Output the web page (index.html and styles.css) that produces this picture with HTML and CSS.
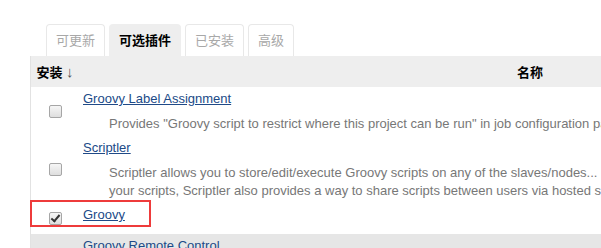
FILE: index.html
```html
<!DOCTYPE html>
<html lang="zh-CN">
<head>
    <meta charset="UTF-8">
    <meta name="viewport" content="width=device-width, initial-scale=1.0">
    <title>插件管理</title>
    <link rel="stylesheet" href="styles.css">
</head>
<body>
    <div class="plugin-manager">
        <div class="tabs">
            <a class="tab">可更新</a>
            <a class="tab active">可选插件</a>
            <a class="tab">已安装</a>
            <a class="tab">高级</a>
        </div>

        <table class="plugins">
            <thead>
                <tr>
                    <th class="col-install">安装&nbsp;<span class="sort-arrow">↓</span></th>
                    <th class="col-name">名称</th>
                    <th class="col-version">版本</th>
                </tr>
            </thead>
            <tbody>
                <tr>
                    <td class="install"><input type="checkbox"></td>
                    <td class="name">
                        <div><a href="#">Groovy Label Assignment</a></div>
                        <div class="excerpt">Provides "Groovy script to restrict where this project can be run" in job configuration pages.</div>
                    </td>
                    <td class="version">1.2.0</td>
                </tr>
                <tr>
                    <td class="install"><input type="checkbox"></td>
                    <td class="name">
                        <div><a href="#">Scriptler</a></div>
                        <div class="excerpt">Scriptler allows you to store/edit/execute Groovy scripts on any of the slaves/nodes... no need to copy paste groovy code anymore. Besides administrating your scripts, Scriptler also provides a way to share scripts between users via hosted script catalogs on the internet.</div>
                    </td>
                    <td class="version">2.9</td>
                </tr>
                <tr>
                    <td class="install marked">
                        <input type="checkbox" checked>
                        <div class="highlight"></div>
                    </td>
                    <td class="name">
                        <div><a href="#">Groovy</a></div>
                        <div class="excerpt"></div>
                    </td>
                    <td class="version">2.0</td>
                </tr>
                <tr class="hover">
                    <td class="install"><input type="checkbox"></td>
                    <td class="name">
                        <div><a href="#">Groovy Remote Control</a></div>
                        <div class="excerpt">Groovy Remote Control Plugin for remote calls.</div>
                    </td>
                    <td class="version">2.0</td>
                </tr>
            </tbody>
        </table>
    </div>
</body>
</html>
```

FILE: styles.css
```css
body {
    margin: 0;
    font-family: "Liberation Sans", Arial, "Noto Sans CJK SC", sans-serif;
    font-size: 13px;
    color: #000;
    background: #fff;
    overflow: hidden;
}

.plugin-manager {
    padding: 24px 0 0 30px;
}

.tabs {
    display: flex;
    gap: 4px;
    margin-left: 16px;
}

.tab {
    box-sizing: border-box;
    height: 32px;
    line-height: 31px;
    padding: 0 9px;
    border: 1px solid #e8e8e8;
    border-bottom: none;
    border-radius: 4px 4px 0 0;
    color: #a8a8a8;
    cursor: pointer;
}

.tab.active {
    background-color: #eee;
    border-color: #eee;
    color: #000;
    font-weight: bold;
}

.plugins {
    width: 1100px;
    table-layout: fixed;
    border-collapse: collapse;
    border-left: 1px solid #e2e2e2;
}

.plugins th {
    height: 31px;
    padding: 0;
    background-color: #eee;
    font-weight: bold;
    text-align: center;
}

.col-install { width: 48px; }
.col-name { width: 902px; }

.sort-arrow {
    font-weight: normal;
    font-size: 15px;
    color: #555;
}

.plugins td {
    padding: 3px 4px;
    vertical-align: top;
}

.plugins td.install {
    padding: 0;
    text-align: center;
    vertical-align: middle;
}

.name div {
    line-height: 18px;
}

.name a {
    color: #204a87;
}

.name .excerpt {
    margin-top: 7px;
    margin-right: -32px;
    padding-left: 26px;
    color: #777;
}

.plugins tr.hover td {
    background-color: #e6e6e6;
}

input[type="checkbox"] {
    appearance: none;
    box-sizing: border-box;
    width: 13px;
    height: 13px;
    margin: 3px 3px 3px 4px;
    vertical-align: middle;
    border: 1px solid #a6a6a6;
    border-radius: 2px;
    background: linear-gradient(#f6f6f6, #dedede);
    position: relative;
}

input[type="checkbox"]:checked::after {
    content: "";
    position: absolute;
    left: 3px;
    top: 0px;
    width: 3px;
    height: 7px;
    border: solid #333;
    border-width: 0 2px 2px 0;
    transform: rotate(40deg);
}

td.marked {
    position: relative;
}

.highlight {
    position: absolute;
    left: -1px;
    top: -3px;
    width: 121px;
    height: 27px;
    box-sizing: border-box;
    border: 2px solid #ee3b3b;
}
```
